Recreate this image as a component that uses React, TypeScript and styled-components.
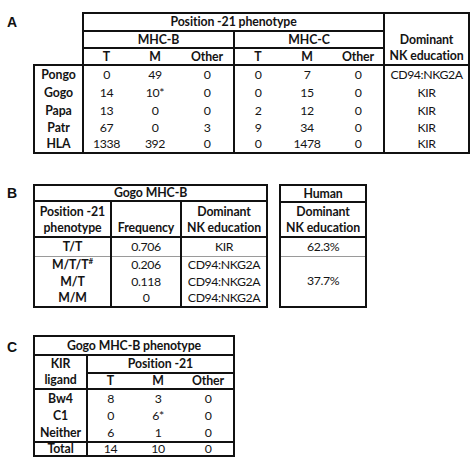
import React from "react";
import styled, { createGlobalStyle } from "styled-components";

const GlobalStyle = createGlobalStyle`
  html, body { margin: 0; padding: 0; background: #ffffff; }
  body { font-family: Lato, "Open Sans", sans-serif; color: #141414; }
`;

const Page = styled.div`
  width: 474px;
  height: 474px;
  box-sizing: border-box;
  padding-top: 12px;
  display: flex;
  flex-direction: column;
  background: #fff;
`;

const Section = styled.section<{ $gap: number }>`
  display: flex;
  align-items: flex-start;
  margin-bottom: ${(p) => p.$gap}px;
`;

const PanelLabel = styled.div<{ $top: number }>`
  width: 33px;
  box-sizing: border-box;
  padding-left: 7px;
  padding-top: ${(p) => p.$top}px;
  font-family: "Liberation Sans", Arial, sans-serif;
  font-weight: bold;
  font-size: 14px;
  line-height: 14px;
  color: #111;
`;

const TablesRow = styled.div`
  display: flex;
  align-items: flex-start;
  gap: 11px;
`;

const Grid = styled.table<{ $w: number }>`
  border-collapse: collapse;
  table-layout: fixed;
  width: ${(p) => p.$w}px;
  font-size: 12.3px;
  line-height: 12px;
`;

const Row = styled.tr<{ $h: number }>`
  height: ${(p) => p.$h}px;
`;

type Edge = "k" | "g" | undefined;

const edge = (e: Edge) =>
  e === "k" ? "2px solid #111" : e === "g" ? "1px solid #9a9a9a" : "none";

const Cell = styled.td<{
  $t?: Edge;
  $r?: Edge;
  $b?: Edge;
  $l?: Edge;
  $bold?: boolean;
  $va?: "top" | "middle" | "bottom";
  $two?: boolean;
}>`
  padding: 0;
  text-align: center;
  white-space: nowrap;
  overflow: visible;
  line-height: ${(p) => (p.$two ? "16px" : "12px")};
  vertical-align: ${(p) => p.$va || "middle"};
  font-weight: ${(p) => (p.$bold ? 700 : 400)};
  letter-spacing: ${(p) => (p.$bold ? "-0.1px" : "-0.4px")};
  border-top: ${(p) => edge(p.$t)};
  border-right: ${(p) => edge(p.$r)};
  border-bottom: ${(p) => edge(p.$b)};
  border-left: ${(p) => edge(p.$l)};
`;

const Sup = styled.sup`
  font-size: 8px;
  line-height: 0;
  vertical-align: 5px;
`;

const Cols = ({ widths }: { widths: number[] }) => (
  <colgroup>
    {widths.map((w, i) => (
      <col key={i} style={{ width: w }} />
    ))}
  </colgroup>
);

const aRows = [
  ["Pongo", "0", "49", "0", "0", "7", "0", "CD94:NKG2A"],
  ["Gogo", "14", "10*", "0", "0", "15", "0", "KIR"],
  ["Papa", "13", "0", "0", "2", "12", "0", "KIR"],
  ["Patr", "67", "0", "3", "9", "34", "0", "KIR"],
  ["HLA", "1338", "392", "0", "0", "1478", "0", "KIR"],
];
const aHeights = [19, 18, 17, 17, 17];

const TableA = () => (
  <Grid $w={435}>
    <Cols widths={[49, 46, 52, 53, 47, 52, 51, 85]} />
    <tbody>
      <Row $h={18}>
        <Cell rowSpan={3} />
        <Cell colSpan={6} $t="k" $l="k" $r="k" $b="k" $bold>
          Position -21 phenotype
        </Cell>
        <Cell rowSpan={3} $t="k" $r="k" $b="k" $bold $va="bottom" $two>
          Dominant
          <br />
          NK education
        </Cell>
      </Row>
      <Row $h={17}>
        <Cell colSpan={3} $l="k" $r="k" $b="k" $bold>
          MHC-B
        </Cell>
        <Cell colSpan={3} $r="k" $b="k" $bold>
          MHC-C
        </Cell>
      </Row>
      <Row $h={17}>
        {["T", "M", "Other", "T", "M", "Other"].map((h, i) => (
          <Cell key={i} $b="k" $bold $l={i === 0 ? "k" : undefined} $r={i === 2 || i === 5 ? "k" : undefined}>
            {h}
          </Cell>
        ))}
      </Row>
      {aRows.map((r, ri) => (
        <Row key={ri} $h={aHeights[ri]}>
          {r.map((v, ci) => (
            <Cell
              key={ci}
              $bold={ci === 0}
              $l={ci === 0 ? "k" : undefined}
              $r={ci === 0 || ci === 3 || ci === 6 || ci === 7 ? "k" : undefined}
              $t={ri === 0 ? "k" : undefined}
              $b={ri === aRows.length - 1 ? "k" : undefined}
            >
              {v}
            </Cell>
          ))}
        </Row>
      ))}
    </tbody>
  </Grid>
);

const bRows: [string, string, string][] = [
  ["M/T/T", "0.206", "CD94:NKG2A"],
  ["M/T", "0.118", "CD94:NKG2A"],
  ["M/M", "0", "CD94:NKG2A"],
];

const TableB = () => (
  <Grid $w={233}>
    <Cols widths={[77, 70, 86]} />
    <tbody>
      <Row $h={16}>
        <Cell colSpan={3} $t="k" $l="k" $r="k" $b="k" $bold>
          Gogo MHC-B
        </Cell>
      </Row>
      <Row $h={36}>
        <Cell $l="k" $r="k" $b="k" $bold $va="bottom" $two>
          Position -21
          <br />
          phenotype
        </Cell>
        <Cell $r="k" $b="k" $bold $va="bottom" $two>
          Frequency
        </Cell>
        <Cell $r="k" $b="k" $bold $va="bottom" $two>
          Dominant
          <br />
          NK education
        </Cell>
      </Row>
      <Row $h={19}>
        <Cell $l="k" $r="k" $b="g" $bold>
          T/T
        </Cell>
        <Cell $r="k" $b="g">0.706</Cell>
        <Cell $r="k" $b="g">KIR</Cell>
      </Row>
      {bRows.map((r, i) => (
        <Row key={i} $h={17}>
          <Cell $l="k" $r="k" $b={i === 2 ? "k" : undefined} $bold>
            {r[0]}
            {i === 0 && <Sup>#</Sup>}
          </Cell>
          <Cell $r="k" $b={i === 2 ? "k" : undefined}>
            {r[1]}
          </Cell>
          <Cell $r="k" $b={i === 2 ? "k" : undefined}>
            {r[2]}
          </Cell>
        </Row>
      ))}
    </tbody>
  </Grid>
);

const TableHuman = () => (
  <Grid $w={86}>
    <Cols widths={[86]} />
    <tbody>
      <Row $h={17}>
        <Cell $t="k" $l="k" $r="k" $b="k" $bold>
          Human
        </Cell>
      </Row>
      <Row $h={35}>
        <Cell $l="k" $r="k" $b="k" $bold $va="bottom" $two>
          Dominant
          <br />
          NK education
        </Cell>
      </Row>
      <Row $h={19}>
        <Cell $l="k" $r="k" $b="g">
          62.3%
        </Cell>
      </Row>
      <Row $h={17}>
        <Cell rowSpan={3} $l="k" $r="k" $b="k">
          37.7%
        </Cell>
      </Row>
      <Row $h={17} />
      <Row $h={17} />
    </tbody>
  </Grid>
);

const cRows = [
  ["Bw4", "8", "3", "0"],
  ["C1", "0", "6*", "0"],
  ["Neither", "6", "1", "0"],
];
const cHeights = [18, 17, 18];

const TableC = () => (
  <Grid $w={200}>
    <Cols widths={[53, 46, 50, 51]} />
    <tbody>
      <Row $h={19}>
        <Cell colSpan={4} $t="k" $l="k" $r="k" $b="k" $bold>
          Gogo MHC-B phenotype
        </Cell>
      </Row>
      <Row $h={17}>
        <Cell rowSpan={2} $l="k" $r="k" $b="k" $bold $va="bottom" $two>
          KIR
          <br />
          ligand
        </Cell>
        <Cell colSpan={3} $r="k" $b="k" $bold>
          Position -21
        </Cell>
      </Row>
      <Row $h={15}>
        {["T", "M", "Other"].map((h, i) => (
          <Cell key={i} $b="k" $r={i === 2 ? "k" : undefined} $bold>
            {h}
          </Cell>
        ))}
      </Row>
      {cRows.map((r, ri) => (
        <Row key={ri} $h={cHeights[ri]}>
          {r.map((v, ci) => (
            <Cell
              key={ci}
              $bold={ci === 0}
              $l={ci === 0 ? "k" : undefined}
              $r={ci === 0 || ci === 3 ? "k" : undefined}
              $b={ri === 2 ? "k" : undefined}
            >
              {v}
            </Cell>
          ))}
        </Row>
      ))}
      <Row $h={14}>
        {["Total", "14", "10", "0"].map((v, ci) => (
          <Cell
            key={ci}
            $bold={ci === 0}
            $l={ci === 0 ? "k" : undefined}
            $r={ci === 0 || ci === 3 ? "k" : undefined}
            $b="k"
          >
            {v}
          </Cell>
        ))}
      </Row>
    </tbody>
  </Grid>
);

export default function App() {
  return (
    <>
      <GlobalStyle />
      <Page>
        <Section $gap={30}>
          <PanelLabel $top={3}>A</PanelLabel>
          <TableA />
        </Section>
        <Section $gap={27}>
          <PanelLabel $top={2}>B</PanelLabel>
          <TablesRow>
            <TableB />
            <TableHuman />
          </TablesRow>
        </Section>
        <Section $gap={0}>
          <PanelLabel $top={5}>C</PanelLabel>
          <TableC />
        </Section>
      </Page>
    </>
  );
}
